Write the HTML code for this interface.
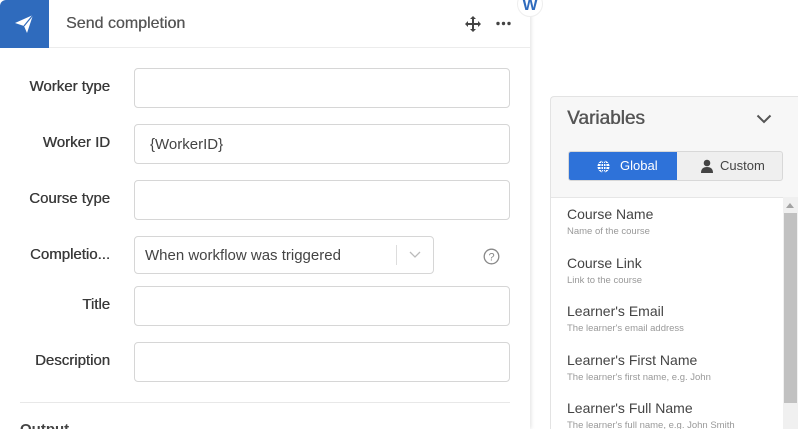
<!DOCTYPE html>
<html style="width:798px;height:429px;overflow:hidden"><head><meta charset="utf-8"><style>
*{box-sizing:border-box;margin:0;padding:0}
body{width:798px;height:429px;overflow:hidden;background:#fff;font-family:"Segoe UI","Liberation Sans",sans-serif;color:#444;position:relative}
.panel{position:absolute;left:0;top:0;width:530px;height:429px;background:#fff;box-shadow:1px 0 4px rgba(0,0,0,.12);overflow:hidden}
.hdr{height:48px;border-bottom:1px solid #ececec;position:relative}
.ico{position:absolute;left:0;top:0;width:49px;height:48px;background:#2f6bbd;border-top-left-radius:6px}
.title{position:absolute;left:66px;top:15px;font-size:16px;color:#555;text-shadow:0.3px 0 #555}
.lbl{position:absolute;width:110px;text-align:right;font-size:15px;color:#3a3a3a;text-shadow:0.35px 0 #3a3a3a}
.inp{position:absolute;left:134px;width:376px;height:40px;border:1px solid #d6d6d6;border-radius:4px;font-size:15px;color:#444;padding:10px 15px}
.var{position:absolute;left:550px;top:96px;width:248px;height:333px;background:#f7f7f7;border:1px solid #e3e3e3;border-right:none;border-bottom:none;border-radius:4px 0 0 0;overflow:hidden}
.item{position:absolute;left:567px}
.item b{display:block;font-weight:normal;font-size:14px;color:#444}
.item i{display:block;font-style:normal;font-size:9.5px;color:#999;margin-top:4px}
</style></head><body>
<div class="panel">
 <div class="hdr">
  <div class="ico"><svg width="49" height="48" viewBox="0 0 49 48"><path d="M15 23 L33 15 L27 33 L24 26 Z" fill="#fff"/><path d="M24 26 L33 15" stroke="#2f6bbd" stroke-width="1.2"/></svg></div>
  <div class="title">Send completion</div>
  <svg style="position:absolute;left:464px;top:15px" width="18" height="18" viewBox="0 0 18 18" fill="#444"><path d="M9 1 L12 4 H10 V8 H14 V6 L17 9 L14 12 V10 H10 V14 H12 L9 17 L6 14 H8 V10 H4 V12 L1 9 L4 6 V8 H8 V4 H6 Z"/></svg>
  <svg style="position:absolute;left:496px;top:21px" width="16" height="5"><circle cx="2" cy="2.5" r="1.7" fill="#444"/><circle cx="7.5" cy="2.5" r="1.7" fill="#444"/><circle cx="13" cy="2.5" r="1.7" fill="#444"/></svg>
 </div>
 <div class="lbl" style="top:78px">Worker type</div><div class="inp" style="top:68px"></div>
 <div class="lbl" style="top:134px">Worker ID</div><div class="inp" style="top:124px;padding-top:11px">{WorkerID}</div>
 <div class="lbl" style="top:190px">Course type</div><div class="inp" style="top:180px"></div>
 <div class="lbl" style="top:246px">Completio...</div>
 <div class="inp" style="top:236px;width:300px;height:38px;padding:10px 10px">When workflow was triggered
  <div style="position:absolute;left:261px;top:8px;width:1px;height:20px;background:#ddd"></div>
  <svg style="position:absolute;left:274px;top:14px" width="12" height="8"><path d="M1 1 L6 6 L11 1" stroke="#bbb" stroke-width="1.3" fill="none"/></svg>
 </div>
 <svg style="position:absolute;left:483px;top:248px" width="17" height="17"><circle cx="8.5" cy="8.5" r="7.3" stroke="#888" stroke-width="1.3" fill="none"/><text x="8.5" y="12.5" font-size="11" text-anchor="middle" fill="#888" font-family="Liberation Sans">?</text></svg>
 <div class="lbl" style="top:296px">Title</div><div class="inp" style="top:286px"></div>
 <div class="lbl" style="top:352px">Description</div><div class="inp" style="top:342px"></div>
 <div style="position:absolute;left:20px;top:402px;width:490px;height:1px;background:#e8e8e8"></div>
 <div style="position:absolute;left:20px;top:421px;font-size:15px;font-weight:bold;color:#444">Output</div>
</div>
<div style="position:absolute;left:517px;top:-9px;width:26px;height:26px;border-radius:50%;background:#fff;border:1px solid #eee;color:#2f6bbd;font-weight:bold;font-size:16px;text-align:center;line-height:28px">W</div>
<div class="var">
 <div style="position:absolute;left:16px;top:11px;font-size:19px;color:#555;text-shadow:0.5px 0 #555">Variables</div>
 <svg style="position:absolute;left:205px;top:17px" width="16" height="10"><path d="M1.5 1.5 L8 8 L14.5 1.5" stroke="#555" stroke-width="2" fill="none"/></svg>
 <div style="position:absolute;left:17px;top:54px;width:215px;height:30px;border:1px solid #d8d8d8;border-radius:3px;background:#efefef;overflow:hidden">
  <div style="position:absolute;left:-1px;top:-1px;width:109px;height:30px;background:#2e72d9;color:#fff;font-size:13px;line-height:30px;padding-left:52px">Global</div>
  <svg style="position:absolute;left:28px;top:8px" width="13" height="13"><circle cx="6.5" cy="6.5" r="6" fill="#fff"/><path d="M0.5 6.5 H12.5 M6.5 0.5 V12.5 M1.5 3.5 H11.5 M1.5 9.5 H11.5" stroke="#2e72d9" stroke-width="0.9"/><ellipse cx="6.5" cy="6.5" rx="2.6" ry="6" stroke="#2e72d9" stroke-width="0.9" fill="none"/></svg>
  <svg style="position:absolute;left:132px;top:7px" width="12" height="14" fill="#444"><circle cx="6" cy="4" r="3.3"/><path d="M0 14 Q0 8 6 8 Q12 8 12 14 Z"/></svg>
  <div style="position:absolute;left:151px;top:0;line-height:28px;font-size:13px;color:#444">Custom</div>
 </div>
 <div style="position:absolute;left:0;top:100px;width:248px;height:233px;background:#fff;border-top:1px solid #e6e6e6"></div>
</div>
<div style="position:absolute;left:783px;top:197px;width:15px;height:232px;background:#f0f0f0"></div>
<div style="position:absolute;left:784px;top:213px;width:13px;height:190px;background:#c1c1c1"></div>
<svg style="position:absolute;left:786px;top:203px" width="8" height="5"><path d="M0 5 L4 0 L8 5Z" fill="#a3a3a3"/></svg>
<div class="item" style="top:206px"><b>Course Name</b><i>Name of the course</i></div>
<div class="item" style="top:255px"><b>Course Link</b><i>Link to the course</i></div>
<div class="item" style="top:303px"><b>Learner's Email</b><i>The learner's email address</i></div>
<div class="item" style="top:352px"><b>Learner's First Name</b><i>The learner's first name, e.g. John</i></div>
<div class="item" style="top:400px;height:29px;overflow:hidden"><b>Learner's Full Name</b><i>The learner's full name, e.g. John Smith</i></div>
</body></html>
